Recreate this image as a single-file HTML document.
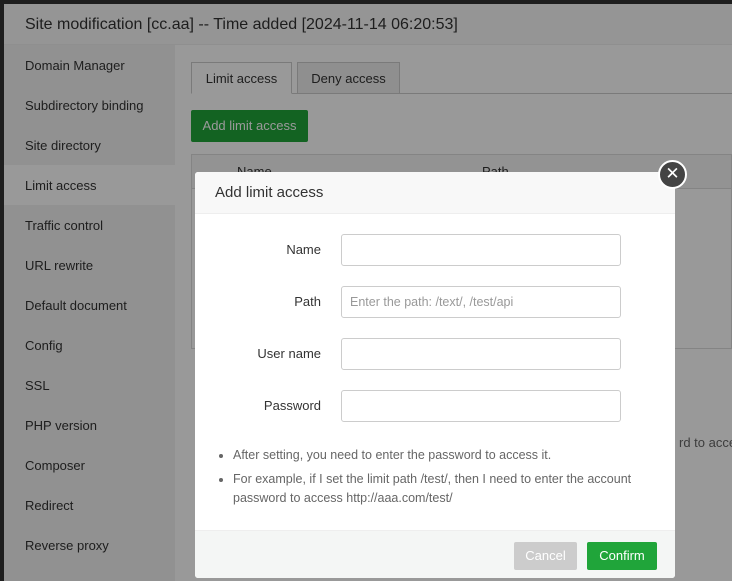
<!DOCTYPE html>
<html style="width:732px;height:581px;overflow:hidden"><head><style>
*{box-sizing:border-box;margin:0;padding:0}
body{width:732px;height:581px;overflow:hidden;background:#333;font-family:"Liberation Sans",sans-serif;font-size:13px;color:#333;position:relative}
.dlg{position:absolute;left:4px;top:4px;width:728px;height:577px;background:#fff;overflow:hidden}
.title{height:41px;background:#f8f8f8;border-bottom:1px solid #eee;font-size:16px;line-height:41px;padding-left:21px;color:#333}
.side{position:absolute;left:0;top:41px;width:171px;bottom:0;background:#f2f2f2}
.side div{height:40px;line-height:42px;padding-left:21px;font-size:13px}
.side .act{background:#fff}
.tabs{position:absolute;left:187px;top:58px;right:0;height:32px;border-bottom:1px solid #ccc}
.tab{position:absolute;top:0;height:32px;line-height:32px;text-align:center;border:1px solid #ccc;background:#eee}
.btn{position:absolute;left:187px;top:106px;width:117px;height:32px;background:#20a53a;color:#fff;line-height:32px;text-align:center;border-radius:2px}
.tbl{position:absolute;left:187px;top:150px;right:0;height:195px;border:1px solid #ddd}
.tbl .h{height:34px;background:#f6f6f6;border-bottom:1px solid #ddd}
.ov{position:absolute;left:0;top:0;width:732px;height:581px;background:rgba(0,0,0,.4)}
.m{position:absolute;left:195px;top:172px;width:480px;height:406px;background:#fff;border-radius:3px;overflow:hidden}
.mh{height:42px;background:#f8f8f8;border-bottom:1px solid #eee;line-height:42px;padding-left:20px;font-size:15px}
.row{position:absolute;left:0;width:480px;height:32px}
.row label{position:absolute;right:354px;line-height:32px}
.row .in{position:absolute;left:146px;width:280px;height:32px;border:1px solid #ccc;border-radius:3px;line-height:30px;padding-left:8px;color:#999;font-size:12.5px}
ul{position:absolute;left:38px;top:274px;width:430px;color:#666;font-size:12.5px;line-height:19px}
li{margin-bottom:5px}
.mf{position:absolute;left:0;bottom:0;width:480px;height:48px;background:#f4f6f5;border-top:1px solid #eee}
.b{position:absolute;top:11px;height:28px;line-height:28px;text-align:center;color:#fff;border-radius:2px}
.x{position:absolute;left:658px;top:160px;width:29px;height:29px;border-radius:50%;background:#444;border:2px solid #fff;color:#fff;text-align:center;line-height:24px;font-size:17px}
</style></head><body>
<div class="dlg">
<div class="title">Site modification [cc.aa] -- Time added [2024-11-14 06:20:53]</div>
<div class="side">
<div>Domain Manager</div><div>Subdirectory binding</div><div>Site directory</div><div class="act">Limit access</div><div>Traffic control</div><div>URL rewrite</div><div>Default document</div><div>Config</div><div>SSL</div><div>PHP version</div><div>Composer</div><div>Redirect</div><div>Reverse proxy</div>
</div>
<div class="tabs"><div class="tab" style="left:0;width:101px;background:#fff;border-bottom-color:#fff">Limit access</div><div class="tab" style="left:106px;width:103px">Deny access</div></div>
<div class="btn">Add limit access</div>
<div class="tbl"><div class="h"><span style="position:absolute;left:45px;top:9px">Name</span><span style="position:absolute;left:290px;top:9px">Path</span></div></div>
<div style="position:absolute;left:675px;top:431px;color:#666;white-space:nowrap">rd to access</div>
</div>
<div class="ov"></div>
<div class="m">
<div class="mh">Add limit access</div>
<div class="row" style="top:62px"><label>Name</label><div class="in"></div></div>
<div class="row" style="top:114px"><label>Path</label><div class="in">Enter the path: /text/, /test/api</div></div>
<div class="row" style="top:166px"><label>User name</label><div class="in"></div></div>
<div class="row" style="top:218px"><label>Password</label><div class="in"></div></div>
<ul><li>After setting, you need to enter the password to access it.</li><li>For example, if I set the limit path /test/, then I need to enter the account password to access http://aaa.com/test/</li></ul>
<div class="mf"><div class="b" style="left:319px;width:63px;background:#ccc">Cancel</div><div class="b" style="left:392px;width:70px;background:#20a53a">Confirm</div></div>
</div>
<div class="x">✕</div>
</body></html>
